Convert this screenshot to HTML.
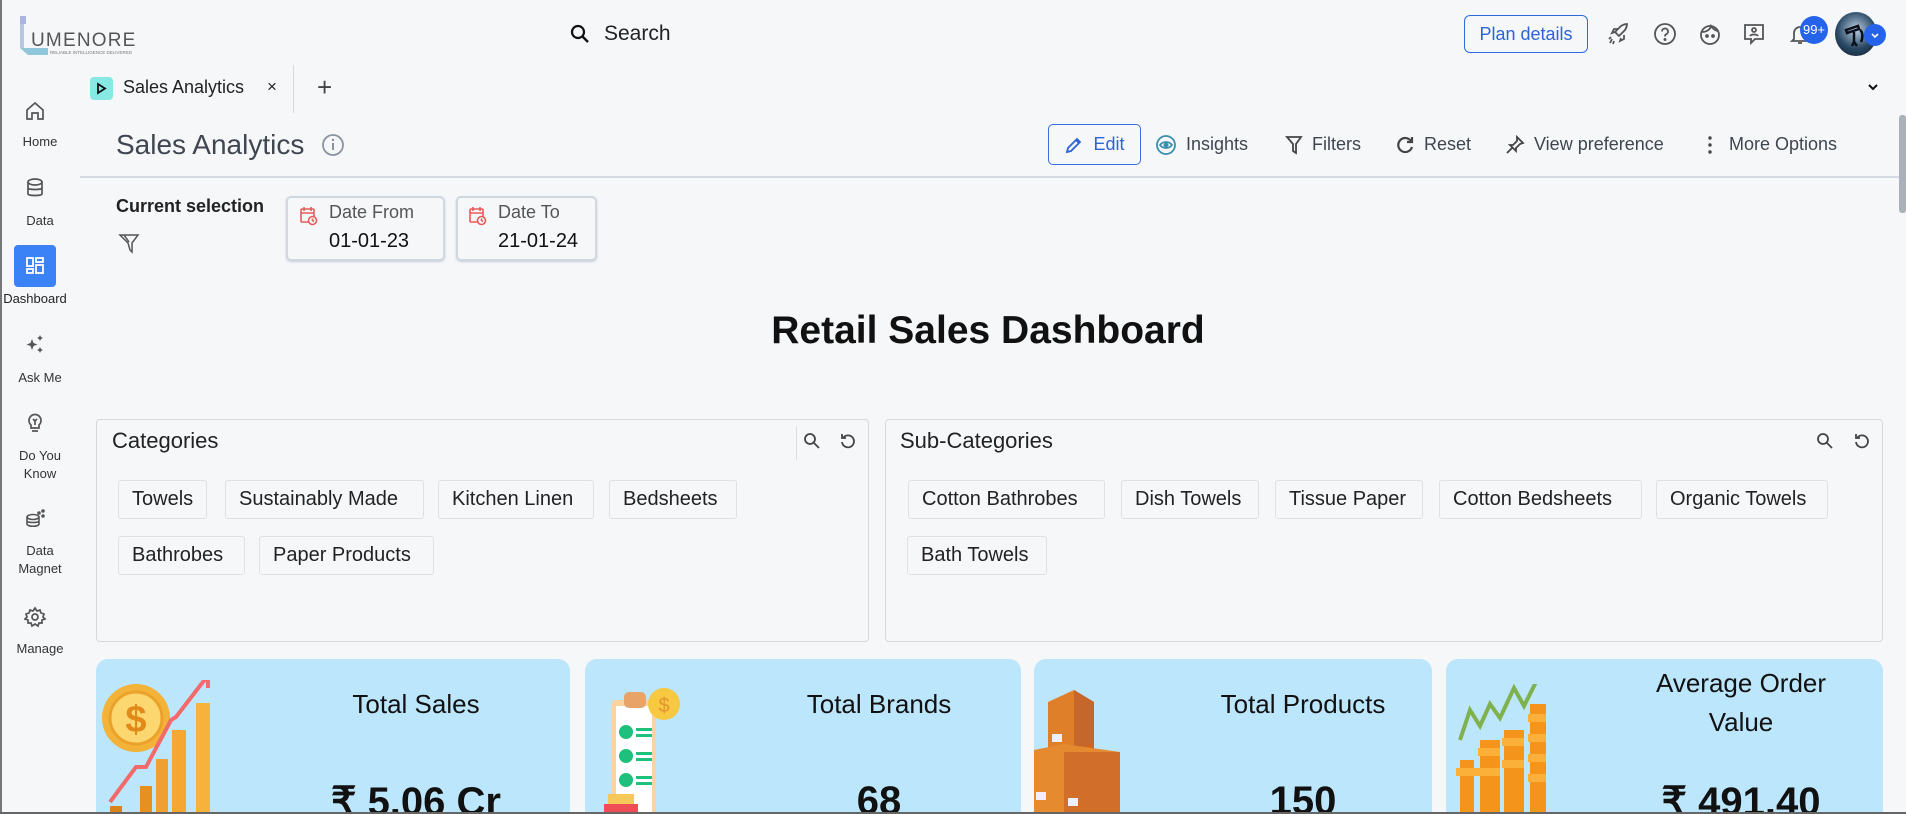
<!DOCTYPE html>
<html style="width:1906px;height:814px;overflow:hidden"><head><meta charset="utf-8"><style>
*{box-sizing:border-box;margin:0;padding:0}
body{width:1906px;height:814px;overflow:hidden;background:#f6f7f9;font-family:"Liberation Sans",sans-serif;color:#1f2328;position:relative}
.a{position:absolute}
.side{position:absolute;left:0;top:0;width:2px;height:814px;background:#777}
.nl{position:absolute;width:80px;text-align:center;font-size:13px;color:#333;left:0;line-height:18px}
.ni{position:absolute;left:24px;width:22px;height:22px}
.btn{position:absolute;top:124px;font-size:18px;color:#3f4650;display:flex;align-items:center;gap:9px;height:41px}
.chip{position:absolute;height:39px;border:1px solid #dde0e4;border-radius:3px;background:#f6f7f9;font-size:20px;line-height:37px;padding:0 13px;color:#222;white-space:nowrap}
.panel{position:absolute;top:419px;height:223px;border:1px solid #d5d8dc;border-radius:4px;background:#f6f7f9}
.card{position:absolute;top:659px;height:155px;background:#bce6fb;border-radius:12px 12px 0 0}
.ct{position:absolute;font-size:26px;color:#111;text-align:center;line-height:39px}
.cv{position:absolute;font-size:40px;font-weight:bold;color:#111;text-align:center}
.date{position:absolute;top:196px;height:65px;border:2px solid #cfd8de;border-radius:5px;background:#f6f7f9;box-shadow:0 1px 2px #ccd}
#clip{position:absolute;left:0;top:0;width:1906px;height:814px;overflow:hidden}
</style></head><body><div id="clip">
<div class="side"></div>
<!-- logo -->
<svg class="a" style="left:18px;top:12px" width="130" height="46" viewBox="0 0 130 46">
<rect x="2" y="4" width="6" height="8" fill="#aab4dd"/><rect x="2" y="12" width="4" height="24" fill="#b9c6e0"/><path d="M2 36 L30 36 L30 43 L10 43 Z" fill="#8fc6da"/>
<text x="13" y="34" font-family="Liberation Sans" font-size="19" letter-spacing="1.2" fill="#555">UMENORE</text>
<text x="32" y="42" font-family="Liberation Sans" font-size="4.5" fill="#777">RELIABLE INTELLIGENCE DELIVERED</text></svg>
<!-- search -->
<svg class="a" style="left:570px;top:24px" width="20" height="20" viewBox="0 0 20 20"><circle cx="8" cy="8" r="6" fill="none" stroke="#111" stroke-width="2.2"/><path d="M12.5 12.5 L18 18" stroke="#111" stroke-width="2.4"/></svg>
<div class="a" style="left:604px;top:22px;font-size:21px;color:#222">Search</div>
<div class="a" style="left:1464px;top:15px;width:124px;height:38px;border:1px solid #2d6ae0;border-radius:6px;color:#2d63d8;font-size:18px;text-align:center;line-height:36px">Plan details</div>
<!-- top icons -->
<svg class="a" style="left:1607px;top:22px" width="24" height="24" viewBox="0 0 24 24" fill="none" stroke="#555" stroke-width="1.8"><path d="M14 4c3-2 6-2 6-2s0 3-2 6l-6 6-4-4z"/><path d="M8 10l-3 1 2-4h4M14 16l-1 3 4-2v-4"/><path d="M5 17l-2 4M7 19l-1 3M4 15l-2 2"/></svg>
<svg class="a" style="left:1653px;top:22px" width="24" height="24" viewBox="0 0 24 24" fill="none" stroke="#555" stroke-width="1.8"><circle cx="12" cy="12" r="10"/><path d="M9 9.5a3 3 0 1 1 4 2.8c-1 .4-1 1-1 2.2"/><circle cx="12" cy="17.5" r=".6" fill="#555"/></svg>
<svg class="a" style="left:1698px;top:22px" width="24" height="24" viewBox="0 0 24 24" fill="none" stroke="#555" stroke-width="1.8"><circle cx="12" cy="13" r="9"/><path d="M4 10c4 0 8-2 9-6 2 3 5 5 7 5"/><circle cx="9" cy="14" r="1" fill="#555"/><circle cx="15" cy="14" r="1" fill="#555"/></svg>
<svg class="a" style="left:1742px;top:22px" width="24" height="24" viewBox="0 0 24 24" fill="none" stroke="#555" stroke-width="1.8"><path d="M3 3h18v14h-8l-4 4v-4H3z"/><circle cx="12" cy="8" r="2"/><path d="M8 14c1-2 7-2 8 0"/></svg>
<svg class="a" style="left:1788px;top:22px" width="24" height="24" viewBox="0 0 24 24" fill="none" stroke="#555" stroke-width="1.8"><path d="M6 17V11a6 6 0 0 1 12 0v6l2 2H4z"/><path d="M10 21h4"/></svg>
<div class="a" style="left:1800px;top:16px;width:28px;height:28px;border-radius:50%;background:#2563eb;color:#fff;font-size:13px;text-align:center;line-height:28px">99+</div>
<div class="a" style="left:1835px;top:12px;width:42px;height:44px;border-radius:50%;background:radial-gradient(circle at 50% 40%,#bcd0e4,#2b4a66 55%,#0b1524)"></div>
<svg class="a" style="left:1840px;top:20px" width="30" height="30" viewBox="0 0 30 30"><path d="M6 10l12-4 1 3-12 4zM14 12v10M12 26l2-4 3 4M20 10c3 2 3 8 1 12" stroke="#0a0f1a" stroke-width="2.5" fill="none"/></svg>
<div class="a" style="left:1864px;top:24px;width:22px;height:22px;border-radius:50%;background:#2563eb"></div>
<svg class="a" style="left:1869px;top:29px" width="12" height="12" viewBox="0 0 12 12"><path d="M3 5l3 3 3-3" stroke="#fff" stroke-width="1.6" fill="none"/></svg>
<!-- tab row -->
<div class="a" style="left:90px;top:77px;width:23px;height:23px;border-radius:4px;background:#86e9e4"></div>
<svg class="a" style="left:95px;top:82px" width="13" height="13" viewBox="0 0 13 13"><path d="M3 2l7 4.5L3 11z" fill="none" stroke="#111" stroke-width="1.8"/></svg>
<div class="a" style="left:123px;top:77px;font-size:18px;color:#222">Sales Analytics</div>
<div class="a" style="left:267px;top:77px;font-size:17px;color:#222">×</div>
<div class="a" style="left:293px;top:65px;width:1px;height:48px;background:#d6d9dd"></div>
<div class="a" style="left:317px;top:72px;font-size:26px;color:#444;font-weight:300">+</div>
<svg class="a" style="left:1866px;top:80px" width="14" height="14" viewBox="0 0 14 14"><path d="M3 5l4 4 4-4" stroke="#111" stroke-width="2" fill="none"/></svg>
<!-- title row -->
<div class="a" style="left:116px;top:129px;font-size:28px;color:#404650">Sales Analytics</div>
<svg class="a" style="left:321px;top:133px" width="24" height="24" viewBox="0 0 24 24"><circle cx="12" cy="12" r="10" fill="none" stroke="#8a93a0" stroke-width="1.8"/><path d="M12 10v7" stroke="#8a93a0" stroke-width="2"/><circle cx="12" cy="7" r="1.2" fill="#8a93a0"/></svg>
<div class="btn" style="left:1048px;width:93px;border:1px solid #3b6ee0;border-radius:5px;color:#2d63d8;justify-content:center">
<svg width="20" height="20" viewBox="0 0 20 20" fill="none" stroke="#2d63d8" stroke-width="1.8"><path d="M3 17l1-4 9-9 3 3-9 9z M12 5l3 3"/></svg>Edit</div>
<div class="btn" style="left:1155px"><svg width="22" height="22" viewBox="0 0 22 22" fill="none" stroke="#3a8fb0" stroke-width="1.8"><circle cx="11" cy="11" r="9"/><path d="M5 11c3-4 9-4 12 0-3 4-9 4-12 0z"/><circle cx="11" cy="11" r="1.6" fill="#3a8fb0"/></svg>Insights</div>
<div class="btn" style="left:1285px"><svg width="18" height="20" viewBox="0 0 18 20" fill="none" stroke="#444" stroke-width="1.8"><path d="M2 2h14l-5 7v9l-3-2V9z"/></svg>Filters</div>
<div class="btn" style="left:1395px"><svg width="20" height="20" viewBox="0 0 20 20" fill="none" stroke="#444" stroke-width="2.2"><path d="M16 6a7 7 0 1 0 1 6"/><path d="M17 2v5h-5"/></svg>Reset</div>
<div class="btn" style="left:1505px"><svg width="20" height="20" viewBox="0 0 20 20" fill="none" stroke="#444" stroke-width="1.8"><path d="M12 2l6 6-3 1-4 4 0 3-6-6 3 0 4-4z M7 13l-5 5"/></svg>View preference</div>
<div class="btn" style="left:1707px;gap:16px"><svg width="6" height="20" viewBox="0 0 6 20"><circle cx="3" cy="3" r="1.7" fill="#444"/><circle cx="3" cy="10" r="1.7" fill="#444"/><circle cx="3" cy="17" r="1.7" fill="#444"/></svg>More Options</div>
<div class="a" style="left:80px;top:176px;width:1826px;height:2px;background:#d3dae3"></div>
<div class="a" style="left:1899px;top:115px;width:7px;height:98px;background:#aab1ba;border-radius:3px"></div>
<!-- selection -->
<div class="a" style="left:116px;top:196px;font-size:18px;font-weight:bold;color:#222">Current selection</div>
<svg class="a" style="left:118px;top:232px" width="22" height="22" viewBox="0 0 22 22" fill="none" stroke="#555" stroke-width="1.5"><path d="M2 3h18l-6 8v9l-2-2-2-7z M6 3l5 7"/></svg>
<div class="date" style="left:286px;width:159px"></div>
<div class="date" style="left:456px;width:141px"></div>
<svg class="a" style="left:300px;top:206px" width="18" height="20" viewBox="0 0 18 20" fill="none" stroke="#e85a5a" stroke-width="1.6"><rect x="1" y="3" width="13" height="13" rx="1"/><path d="M1 7h13M4 1v4M11 1v4"/><circle cx="12.5" cy="14.5" r="4" fill="#f6f7f9"/><path d="M12.5 12.5v2l1.5 1"/></svg>
<svg class="a" style="left:469px;top:206px" width="18" height="20" viewBox="0 0 18 20" fill="none" stroke="#e85a5a" stroke-width="1.6"><rect x="1" y="3" width="13" height="13" rx="1"/><path d="M1 7h13M4 1v4M11 1v4"/><circle cx="12.5" cy="14.5" r="4" fill="#f6f7f9"/><path d="M12.5 12.5v2l1.5 1"/></svg>
<div class="a" style="left:329px;top:202px;font-size:18px;color:#555">Date From</div>
<div class="a" style="left:329px;top:230px;font-size:20px;color:#111">01-01-23</div>
<div class="a" style="left:498px;top:202px;font-size:18px;color:#555">Date To</div>
<div class="a" style="left:498px;top:230px;font-size:20px;color:#111">21-01-24</div>
<div class="a" style="left:0;width:1976px;top:309px;text-align:center;font-size:39px;font-weight:bold;color:#111">Retail Sales Dashboard</div>
<!-- panels -->
<div class="panel" style="left:96px;width:773px"></div>
<div class="panel" style="left:885px;width:998px"></div>
<div class="a" style="left:112px;top:428px;font-size:22px;color:#222">Categories</div>
<div class="a" style="left:900px;top:428px;font-size:22px;color:#222">Sub-Categories</div>
<div class="a" style="left:796px;top:426px;width:1px;height:34px;background:#ddd"></div>
<svg class="a" style="left:803px;top:432px" width="18" height="18" viewBox="0 0 18 18" fill="none" stroke="#444" stroke-width="1.8"><circle cx="7" cy="7" r="5"/><path d="M11 11l5 5"/></svg>
<svg class="a" style="left:839px;top:432px" width="18" height="18" viewBox="0 0 18 18" fill="none" stroke="#444" stroke-width="1.8"><path d="M4 6a6 6 0 1 1-1 4"/><path d="M3 2v4h4"/></svg>
<svg class="a" style="left:1816px;top:432px" width="18" height="18" viewBox="0 0 18 18" fill="none" stroke="#444" stroke-width="1.8"><circle cx="7" cy="7" r="5"/><path d="M11 11l5 5"/></svg>
<svg class="a" style="left:1853px;top:432px" width="18" height="18" viewBox="0 0 18 18" fill="none" stroke="#444" stroke-width="1.8"><path d="M4 6a6 6 0 1 1-1 4"/><path d="M3 2v4h4"/></svg>
<div class="chip" style="left:118px;top:480px">Towels</div>
<div class="chip" style="left:225px;top:480px;width:199px">Sustainably Made</div>
<div class="chip" style="left:438px;top:480px;width:156px">Kitchen Linen</div>
<div class="chip" style="left:609px;top:480px;width:128px">Bedsheets</div>
<div class="chip" style="left:118px;top:536px;width:127px">Bathrobes</div>
<div class="chip" style="left:259px;top:536px;width:175px">Paper Products</div>
<div class="chip" style="left:908px;top:480px;width:197px">Cotton Bathrobes</div>
<div class="chip" style="left:1121px;top:480px;width:138px">Dish Towels</div>
<div class="chip" style="left:1275px;top:480px;width:148px">Tissue Paper</div>
<div class="chip" style="left:1439px;top:480px;width:203px">Cotton Bedsheets</div>
<div class="chip" style="left:1656px;top:480px;width:172px">Organic Towels</div>
<div class="chip" style="left:907px;top:536px;width:140px">Bath Towels</div>
<!-- cards -->
<div class="card" style="left:96px;width:474px"></div>
<div class="card" style="left:585px;width:436px"></div>
<div class="card" style="left:1034px;width:398px"></div>
<div class="card" style="left:1446px;width:437px"></div>
<svg class="a" style="left:96px;top:680px" width="160" height="134" viewBox="0 0 160 134">
<rect x="14" y="126" width="12" height="10" fill="#d9831a"/><rect x="44" y="106" width="12" height="30" fill="#e6911f"/><rect x="60" y="79" width="12" height="60" fill="#f0a030"/><rect x="76" y="50" width="14" height="90" fill="#f5a732"/><rect x="100" y="23" width="14" height="120" fill="#f7b23c"/>
<circle cx="40" cy="38" r="34" fill="#f3b238"/><circle cx="40" cy="38" r="26" fill="#fcd66e" stroke="#eba22a" stroke-width="3"/>
<text x="40" y="52" font-family="Liberation Sans" font-size="38" font-weight="bold" fill="#e18a1a" text-anchor="middle">$</text>
<path d="M14 122 L40 87 L50 87 L75 40 L80 37 L110 -2 M100 -2 L112 -4 L112 8" stroke="#f26a6a" stroke-width="4" fill="none"/></svg>
<svg class="a" style="left:596px;top:684px" width="120" height="130" viewBox="0 0 120 130">
<rect x="16" y="16" width="44" height="120" rx="3" fill="#fbd3a2"/><rect x="20" y="22" width="36" height="112" fill="#fff"/>
<rect x="28" y="8" width="22" height="16" rx="5" fill="#e8a468"/>
<circle cx="68" cy="20" r="16" fill="#f6c940"/><text x="68" y="28" font-family="Liberation Sans" font-size="20" fill="#e39430" text-anchor="middle">$</text>
<g fill="#1fc07c"><circle cx="30" cy="48" r="7"/><circle cx="30" cy="72" r="7"/><circle cx="30" cy="96" r="7"/><rect x="40" y="44" width="16" height="3"/><rect x="40" y="50" width="16" height="3"/><rect x="40" y="68" width="16" height="3"/><rect x="40" y="74" width="16" height="3"/><rect x="40" y="92" width="16" height="3"/><rect x="40" y="98" width="16" height="3"/></g>
<rect x="12" y="110" width="26" height="10" fill="#f6c85a"/><rect x="8" y="120" width="34" height="14" fill="#ef4d55"/></svg>
<svg class="a" style="left:1034px;top:690px" width="90" height="124" viewBox="0 0 90 124">
<path d="M14 12 L40 0 L60 12 L60 68 L14 68Z" fill="#e07f2a"/><path d="M40 0 L60 12 L60 68 L40 62Z" fill="#c5662a"/>
<path d="M0 60 L30 54 L86 62 L86 124 L0 124Z" fill="#e58a2e"/><path d="M30 62 L86 62 L86 124 L30 124Z" fill="#d06e2a"/>
<rect x="18" y="44" width="10" height="8" fill="#eef"/><rect x="2" y="102" width="10" height="8" fill="#eef"/><rect x="34" y="108" width="10" height="8" fill="#eef"/></svg>
<svg class="a" style="left:1452px;top:684px" width="140" height="130" viewBox="0 0 140 130">
<g fill="#f4941a"><rect x="8" y="76" width="14" height="60"/><rect x="28" y="56" width="20" height="80"/><rect x="52" y="46" width="20" height="90"/><rect x="78" y="20" width="16" height="116"/></g>
<g fill="#fbb03a"><rect x="4" y="84" width="22" height="8"/><rect x="26" y="64" width="22" height="8"/><rect x="26" y="84" width="22" height="8"/><rect x="50" y="54" width="22" height="8"/><rect x="50" y="76" width="22" height="8"/><rect x="76" y="30" width="18" height="8"/><rect x="76" y="50" width="18" height="8"/><rect x="76" y="70" width="18" height="8"/><rect x="76" y="90" width="18" height="8"/></g>
<path d="M8 56 L18 26 L28 42 L38 20 L48 34 L62 4 L72 22 L84 -2" stroke="#7fb24e" stroke-width="4" fill="none"/></svg>
<div class="ct" style="left:316px;width:200px;top:685px">Total Sales</div>
<div class="ct" style="left:779px;width:200px;top:685px">Total Brands</div>
<div class="ct" style="left:1193px;width:220px;top:685px">Total Products</div>
<div class="ct" style="left:1631px;width:220px;top:664px">Average Order<br>Value</div>
<div class="cv" style="left:266px;width:300px;top:779px">₹ 5.06 Cr</div>
<div class="cv" style="left:779px;width:200px;top:779px">68</div>
<div class="cv" style="left:1193px;width:220px;top:779px">150</div>
<div class="cv" style="left:1591px;width:300px;top:779px">₹ 491.40</div>
<div class="a" style="left:0;top:812px;width:1906px;height:2px;background:#666"></div>
<!-- sidebar -->
<svg class="ni" style="top:100px" viewBox="0 0 22 22" fill="none" stroke="#555" stroke-width="1.7"><path d="M3 10L11 3l8 7v9h-5v-6H8v6H3z"/></svg>
<div class="nl" style="top:133px">Home</div>
<svg class="ni" style="top:177px" viewBox="0 0 22 22" fill="none" stroke="#555" stroke-width="1.7"><ellipse cx="11" cy="5" rx="7" ry="3"/><path d="M4 5v12c0 2 14 2 14 0V5M4 11c0 2 14 2 14 0"/></svg>
<div class="nl" style="top:212px">Data</div>
<div class="a" style="left:14px;top:245px;width:42px;height:42px;border-radius:4px;background:#3b82f6"></div>
<svg class="a" style="left:25px;top:256px" width="20" height="20" viewBox="0 0 20 20" fill="none" stroke="#fff" stroke-width="1.8"><rect x="2" y="2" width="6" height="8"/><rect x="2" y="13" width="6" height="4"/><rect x="11" y="2" width="7" height="4"/><rect x="11" y="9" width="7" height="8"/></svg>
<div class="nl" style="top:290px;left:-5px;width:80px;color:#222">Dashboard</div>
<svg class="ni" style="top:333px" viewBox="0 0 22 22" fill="#555"><path d="M8 6l1.5 4 4 1.5-4 1.5L8 17l-1.5-4-4-1.5 4-1.5z M16 2l1 2 2 1-2 1-1 2-1-2-2-1 2-1z M16 14l1 2 2 1-2 1-1 2-1-2-2-1 2-1z"/></svg>
<div class="nl" style="top:369px">Ask Me</div>
<svg class="ni" style="top:411px" viewBox="0 0 22 22" fill="none" stroke="#555" stroke-width="1.7"><path d="M7 14a6 6 0 1 1 8 0v3H7z M8 20h6 M11 14v-4l-2-2 M11 10l2-2"/></svg>
<div class="nl" style="top:447px">Do You<br>Know</div>
<svg class="ni" style="top:508px" viewBox="0 0 22 22" fill="none" stroke="#555" stroke-width="1.6"><ellipse cx="9" cy="9" rx="6" ry="2.5"/><path d="M3 9v7c0 3 12 3 12 0V9 M3 13c0 2 12 2 12 0"/><circle cx="15" cy="5" r="1" fill="#555"/><circle cx="19" cy="3" r="1" fill="#555"/><circle cx="19" cy="8" r="1" fill="#555"/></svg>
<div class="nl" style="top:542px">Data<br>Magnet</div>
<svg class="ni" style="top:606px" viewBox="0 0 22 22" fill="none" stroke="#555" stroke-width="1.7"><circle cx="11" cy="11" r="3"/><path d="M11 2l2 3 3-1 1 3 3 1-1 3 2 2-3 1 0 3-3 0-1 3-3-2-3 2-1-3-3 0 0-3-3-1 2-2-1-3 3-1 1-3 3 1z"/></svg>
<div class="nl" style="top:640px">Manage</div>
</div></body></html>
